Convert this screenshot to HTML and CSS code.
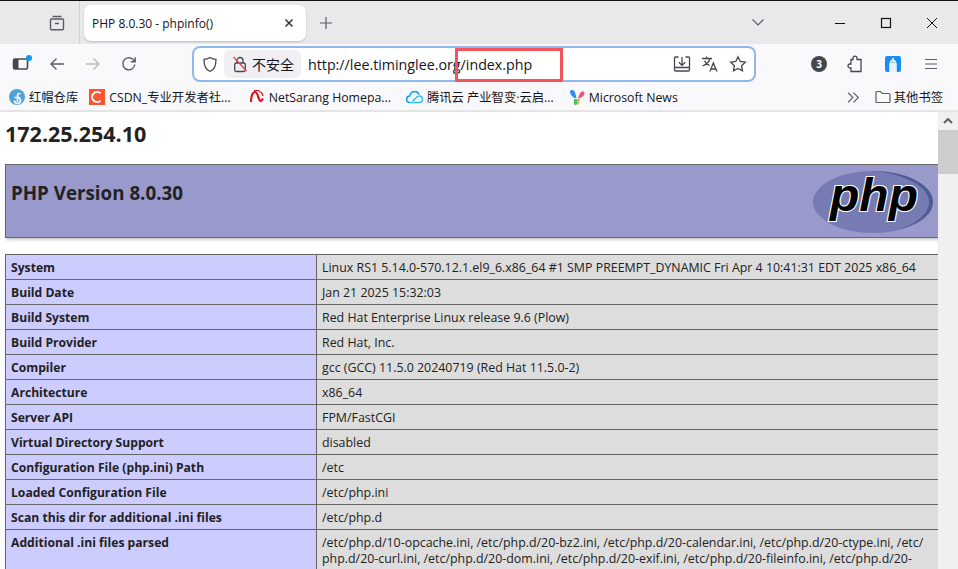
FILE: index.html
```html
<!DOCTYPE html>
<html lang="en">
<head>
<meta charset="utf-8">
<title>PHP 8.0.30 - phpinfo()</title>
<link rel="stylesheet" href="styles.css">
</head>
<body>
<div class="browser">
  <header class="tabstrip">
    <div class="tab-lead">
      <svg class="ico" width="18" height="18" viewBox="0 0 18 18" fill="none" stroke="#5b5b66" stroke-width="1.4"><path d="M4.5 2.5h9M2.5 5h13M2.5 5.2v9.300a1.200 1.200 0 0 0 1.200 1.200h10.600a1.200 1.200 0 0 0 1.200-1.200V5.200M7 9.500h4"/></svg>
    </div>
    <div class="tab">
      <span class="tab-title">PHP 8.0.30 - phpinfo()</span>
      <svg width="10" height="10" viewBox="0 0 10 10" stroke="#333" stroke-width="1.5"><path d="M1.5 1.5l7 7M8.500 1.500l-7 7"/></svg>
    </div>
    <svg class="newtab" width="14" height="14" viewBox="0 0 14 14" stroke="#5b5b66" stroke-width="1.2"><path d="M7 1v12M1 7h12"/></svg>
    <div class="strip-space"></div>
    <svg class="tablist" width="14" height="9" viewBox="0 0 14 9" fill="none" stroke="#5b5b66" stroke-width="1.2"><path d="M1.5 1.5L7 7l5.5-5.5"/></svg>
    <div class="winctl">
      <svg width="12" height="12" viewBox="0 0 12 12" stroke="#111" stroke-width="1"><path d="M1 6.5h10"/></svg>
      <svg width="12" height="12" viewBox="0 0 12 12" fill="none" stroke="#111" stroke-width="1.2"><rect x="1.5" y="1.5" width="9" height="9"/></svg>
      <svg width="12" height="12" viewBox="0 0 12 12" stroke="#111" stroke-width="1"><path d="M1 1l10 10M11 1L1 11"/></svg>
    </div>
  </header>

  <nav class="toolbar">
    <div class="nav-btns">
      <span class="sidebar-btn">
        <svg width="18" height="18" viewBox="0 0 18 18"><rect x="1.5" y="4" width="14" height="10" rx="1.5" fill="none" stroke="#46464e" stroke-width="1.6"/><rect x="1.5" y="4" width="5" height="10" fill="#46464e"/></svg>
        <i class="dot"></i>
      </span>
      <svg width="16" height="16" viewBox="0 0 16 16" fill="none" stroke="#5b5b66" stroke-width="1.4"><path d="M15 8H2M7.5 2.5L2 8l5.5 5.5"/></svg>
      <svg width="16" height="16" viewBox="0 0 16 16" fill="none" stroke="#b9b9c0" stroke-width="1.4"><path d="M1 8h13M8.5 2.5L14 8l-5.500 5.500"/></svg>
      <svg width="16" height="16" viewBox="0 0 16 16" fill="none" stroke="#5b5b66" stroke-width="1.4"><path d="M13.800 8.500A6 6 0 1 1 11.800 3.300L14 5.500M14.200 1.300v4.400H9.800"/></svg>
    </div>
    <div class="urlbar">
      <svg class="shield" width="16" height="17" viewBox="0 0 16 17" fill="none" stroke="#46464e" stroke-width="1.3"><path d="M8 1.500c2 1.300 4 1.800 6 1.900 0 6.500-1.800 10.300-6 12.100C3.800 13.700 2 9.900 2 3.400c2 0 4-.6 6-1.900z"/></svg>
      <div class="insecure">
        <svg width="16" height="18" viewBox="0 0 16 18" fill="none"><path d="M5 8V5.500a3 3 0 0 1 6 0V8" stroke="#46464e" stroke-width="1.300"/><rect x="2.700" y="8" width="10.600" height="8.500" rx="1.500" stroke="#46464e" stroke-width="1.300"/><path d="M1.500 2l13 14" stroke="#e2405f" stroke-width="1.300"/></svg>
        <span>不安全</span>
      </div>
      <span class="url">http://lee.timinglee.org/index.php</span>
      <div class="url-icons">
        <svg width="18" height="18" viewBox="0 0 18 18" fill="none" stroke="#46464e" stroke-width="1.300"><path d="M5.500 2H2.500a1 1 0 0 0-1 1v12a1 1 0 0 0 1 1h13a1 1 0 0 0 1-1V3a1 1 0 0 0-1-1h-3M1.500 12.500h15M9 2v8M5.800 7.200L9 10.400l3.200-3.200"/></svg>
        <svg width="18" height="18" viewBox="0 0 18 18" fill="none" stroke="#46464e" stroke-width="1.300"><path d="M1 3.500h10M5.500 1.500v2M9 3.500c-.8 3.500-3.500 6-7.500 7.500M3.500 5.800c1 2.200 2.800 3.900 5 4.800M9 16.500l3.300-8.500 3.700 8.500M10.200 14h4.800"/></svg>
        <svg width="18" height="18" viewBox="0 0 18 18" fill="none" stroke="#46464e" stroke-width="1.300"><path d="M9 1.800l2.200 4.700 5.100.7-3.700 3.500.9 5.100L9 13.400l-4.500 2.400.9-5.100L1.700 7.200l5.100-.7z"/></svg>
      </div>
    </div>
    <div class="tool-right">
      <span class="badge">3</span>
      <svg class="tool-ext" width="18" height="18" viewBox="0 0 18 18" fill="none" stroke="#46464e" stroke-width="1.300"><path d="M7 4.500V3.200a2 2 0 0 1 4 0v1.300h4v12H5v-3.500H4a2 2 0 0 1 0-4h1V4.500z"/></svg>
      <svg class="tool-profile" width="16" height="16" viewBox="0 0 16 16"><rect width="16" height="16" rx="2" fill="#1a8cf5"/><path d="M8 3.500c2.500 0 3.800 2.500 3.800 6.500v6H4.200v-6C4.200 6 5.500 3.500 8 3.500z" fill="#e6f3fe"/><circle cx="8" cy="2.800" r="1" fill="#e6f3fe"/><circle cx="7" cy="6.300" r=".6" fill="#1a8cf5"/><circle cx="9" cy="6.300" r=".6" fill="#1a8cf5"/></svg>
      <svg width="14" height="12" viewBox="0 0 14 12" stroke="#5b5b66" stroke-width="1.200"><path d="M1 1.500h12M1 6h12M1 10.500h12"/></svg>
    </div>
    <div class="annotation"></div>
  </nav>

  <div class="bookmarks">
    <span class="bm bm-1"><svg width="16" height="16" viewBox="0 0 16 16"><circle cx="8" cy="8" r="8" fill="#51a2da"/><path d="M8.500 13V6.500a2 2 0 0 1 3-1.700M5.500 8.500h5.500M8.500 8.500a3 3 0 1 1-3 3" fill="none" stroke="#fff" stroke-width="1.600"/></svg>红帽仓库</span>
    <span class="bm bm-2"><svg width="16" height="16" viewBox="0 0 16 16"><rect width="16" height="16" fill="#fc5531"/><path d="M11.500 4.300A5 5 0 1 0 11.500 11.700" fill="none" stroke="#fff" stroke-width="1.900"/></svg>CSDN_专业开发者社...</span>
    <span class="bm bm-3"><svg width="16" height="16" viewBox="0 0 16 16" fill="none" stroke="#d9121f" stroke-width="2.200"><path d="M2 13C2 6 4 3 6 3s3 4 4 7 2 3 4-.5"/><path d="M5 2c3-1.500 8 0 9 5" stroke-width="1.200"/></svg>NetSarang Homepa...</span>
    <span class="bm bm-4"><svg width="17" height="14" viewBox="0 0 17 14" fill="none" stroke-width="1.500"><path d="M4 12.500a3.200 3.200 0 0 1-.3-6.400C4.300 3.500 6.300 1.500 8.800 1.500c2 0 3.600 1.200 4.300 3" stroke="#00a3ff"/><path d="M4 12.500h9.300a3 3 0 0 0 0-6.500c-1.800 0-2.800 1-4 2.500L6.500 11" stroke="#2dc3e8"/></svg>腾讯云 产业智变·云启...</span>
    <span class="bm bm-5"><svg width="16" height="17" viewBox="0 0 16 17"><path d="M1 2.500C1 .5 4.500 0 6 3l1.500 6C4.500 9.500 1 6 1 2.500z" fill="#2f8ff0"/><path d="M15.500 4C15.500 2 12.500 2 11 4L8.800 9.500c3.500-.500 6.700-2.500 6.700-5.500z" fill="#f0527a"/><path d="M5 10h3.500l-.5 5c-.500 1.500-2.500 1.500-3 0z" fill="#46c46c"/><path d="M8.500 10l2.500 0-1.500 5c-.500.800-1.200.800-1.500 0z" fill="#f5a623"/></svg>Microsoft News</span>
    <span class="bm-space"></span>
    <svg class="bm-more" width="13" height="11" viewBox="0 0 13 11" fill="none" stroke="#5b5b66" stroke-width="1.200"><path d="M1 .7l4.800 4.800L1 10.300M6.500.7l4.800 4.800-4.800 4.800"/></svg>
    <span class="bm bm-folder"><svg width="16" height="14" viewBox="0 0 16 14" fill="none" stroke="#5b5b66" stroke-width="1.200"><path d="M1 11.500V2.500a1 1 0 0 1 1-1h3.500l2 2H14a1 1 0 0 1 1 1v7a1 1 0 0 1-1 1H2a1 1 0 0 1-1-1z"/></svg>其他书签</span>
  </div>

  <main class="viewport">
    <div class="content">
      <h1 class="host">172.25.254.10</h1>
      <div class="php-head">
        <h2 class="php-version">PHP Version 8.0.30</h2>
        <svg class="php-logo" width="122" height="64" viewBox="0 0 122 64">
          <ellipse cx="61" cy="32" rx="60" ry="31" fill="#777bb3"/>
          <path d="M61 1c33 0 60 14 60 31 0 12-13 22-33 27 18-6 29-16 29-27C117 16 92 4 61 1z" fill="#4f5b93"/>
          <text class="php-word" x="18" y="41" textLength="88" lengthAdjust="spacingAndGlyphs">php</text>
        </svg>
      </div>
      <table class="info">
        <tbody>
          <tr><th>System</th><td>Linux RS1 5.14.0-570.12.1.el9_6.x86_64 #1 SMP PREEMPT_DYNAMIC Fri Apr 4 10:41:31 EDT 2025 x86_64</td></tr>
          <tr><th>Build Date</th><td>Jan 21 2025 15:32:03</td></tr>
          <tr><th>Build System</th><td>Red Hat Enterprise Linux release 9.6 (Plow)</td></tr>
          <tr><th>Build Provider</th><td>Red Hat, Inc.</td></tr>
          <tr><th>Compiler</th><td>gcc (GCC) 11.5.0 20240719 (Red Hat 11.5.0-2)</td></tr>
          <tr><th>Architecture</th><td>x86_64</td></tr>
          <tr><th>Server API</th><td>FPM/FastCGI</td></tr>
          <tr><th>Virtual Directory Support</th><td>disabled</td></tr>
          <tr><th>Configuration File (php.ini) Path</th><td>/etc</td></tr>
          <tr><th>Loaded Configuration File</th><td>/etc/php.ini</td></tr>
          <tr><th>Scan this dir for additional .ini files</th><td>/etc/php.d</td></tr>
          <tr><th>Additional .ini files parsed</th><td>/etc/php.d/10-opcache.ini, /etc/php.d/20-bz2.ini, /etc/php.d/20-calendar.ini, /etc/php.d/20-ctype.ini, /etc/<br>php.d/20-curl.ini, /etc/php.d/20-dom.ini, /etc/php.d/20-exif.ini, /etc/php.d/20-fileinfo.ini, /etc/php.d/20-</td></tr>
        </tbody>
      </table>
    </div>
    <div class="scrollbar">
      <svg class="sb-up" width="10" height="6" viewBox="0 0 10 6" fill="none" stroke="#606060" stroke-width="2"><path d="M1 5l4-4 4 4"/></svg>
      <div class="sb-thumb"></div>
    </div>
  </main>
</div>
</body>
</html>
```
FILE: styles.css
```css
* { box-sizing: border-box; }
html, body { margin: 0; height: 100%; overflow: hidden; background: #fff; }
.browser {
  display: flex; flex-direction: column; height: 569px; width: 958px;
  font-family: "Open Sans", "Noto Sans CJK SC", sans-serif; color: #15141a;
}
.tabstrip {
  height: 44px; flex: none; display: flex; align-items: center;
  background: #e9e9ec; border-top: 1px solid #111;
}
.tab-lead {
  width: 80px; height: 43px; display: flex; align-items: center; padding-left: 48px;
  border-right: 1px solid #cfcfd4;
}
.tab {
  width: 222px; height: 36px; margin-left: 4px; margin-top: 1px; background: #fff; border-radius: 7px;
  box-shadow: 0 1px 2px rgba(0,0,0,.2);
  display: flex; align-items: center; justify-content: space-between; padding: 0 12px 0 8px;
}
.tab-title { font-size: 12px; }
.newtab { margin-left: 13px; }
.strip-space { flex: 1; }
.tablist { margin-right: 69px; }
.winctl { display: flex; gap: 34px; padding-right: 20px; align-items: center; }
.toolbar {
  height: 40px; flex: none; display: flex; align-items: center; background: #f9f9fb; position: relative;
}
.nav-btns { width: 192px; display: flex; align-items: center; gap: 20px; padding-left: 12px; }
.sidebar-btn { position: relative; display: flex; width: 18px; height: 18px; margin-right: -1px; }
.dot { position: absolute; right: -2px; top: 0; width: 6px; height: 6px; border-radius: 50%; background: #0a9cf5; }
.urlbar {
  width: 564px; height: 36px; border: 2px solid #8fb8ec; border-radius: 8px; background: #fff;
  display: flex; align-items: center; padding: 0 7px 0 8px;
}
.insecure {
  margin-left: 6px; height: 28px; width: 77px; border-radius: 6px; background: #f0f0f4;
  display: flex; align-items: center; gap: 4px; padding-left: 8px; font-size: 14px;
}
.url { margin-left: 7px; font-size: 14.250px; color: #15141a; }
.url-icons { margin-left: auto; display: flex; gap: 10px; align-items: center; }
.tool-right { display: flex; align-items: center; margin-left: 55px; }
.tool-ext { margin-left: 19px; }
.tool-profile { margin: 0 23px 0 21px; }
.badge {
  width: 16px; height: 16px; border-radius: 50%; background: #46464e; color: #fff;
  font-size: 10px; font-weight: 700; display: flex; align-items: center; justify-content: center;
}
.annotation {
  position: absolute; left: 455px; top: 4px; width: 108px; height: 34px; border: 3px solid #f5535a; border-radius: 1px;
}
.bookmarks {
  height: 28px; flex: none; display: flex; align-items: center; background: #f9f9fb;
  border-bottom: 2px solid #e4e4e7; padding: 0 15px 0 9px; font-size: 12.300px; color: #15141a;
}
.bm { display: flex; align-items: center; gap: 4px; white-space: nowrap; }
.bm-2 { margin-left: 11px; }
.bm-3 { margin-left: 18px; }
.bm-4 { margin-left: 15px; }
.bm-5 { margin-left: 15px; }
.bm-folder { gap: 3px; }
.bm-space { flex: 1; }
.bm-more { margin-right: 15px; }
.viewport { flex: 1; min-height: 0; display: flex; background: #fff; }
.content { flex: 1; min-width: 0; overflow: hidden; padding: 0 0 0 5px; color: #222; }
.host { margin: 9px 0 17px; font-size: 21.500px; line-height: 26px; font-weight: 700; }
.php-head {
  width: 940px; height: 74px; background: #99c; border: 1px solid #666;
  box-shadow: 1px 2px 3px #ccc; position: relative;
}
.php-version { margin: 15px 0 0 5px; font-size: 18.750px; line-height: 26px; font-weight: 700; }
.php-logo { position: absolute; left: 806px; top: 5px; overflow: visible; }
.php-word {
  font-family: "Liberation Sans", sans-serif; font-style: italic; font-weight: 700; font-size: 46px;
  fill: #000; stroke: #fff; stroke-width: 2.200px; paint-order: stroke;
}
.info {
  margin-top: 16px; width: 940px; table-layout: fixed; border-collapse: collapse; font-size: 12.400px;
  box-shadow: 1px 2px 3px #ccc;
}
.info th, .info td { border: 1px solid #666; padding: 5px 5px 3px; line-height: 16px; vertical-align: top; text-align: left; }
.info th { width: 311px; background: #ccf; font-weight: 700; font-size: 12.150px; }
.info td { background: #ddd; }
.scrollbar { width: 20px; flex: none; background: #f0f0f0; position: relative; }
.sb-up { position: absolute; left: 5px; top: 6px; }
.sb-thumb { position: absolute; left: 0; top: 18px; width: 20px; height: 44px; background: #cdcdcd; }
```
